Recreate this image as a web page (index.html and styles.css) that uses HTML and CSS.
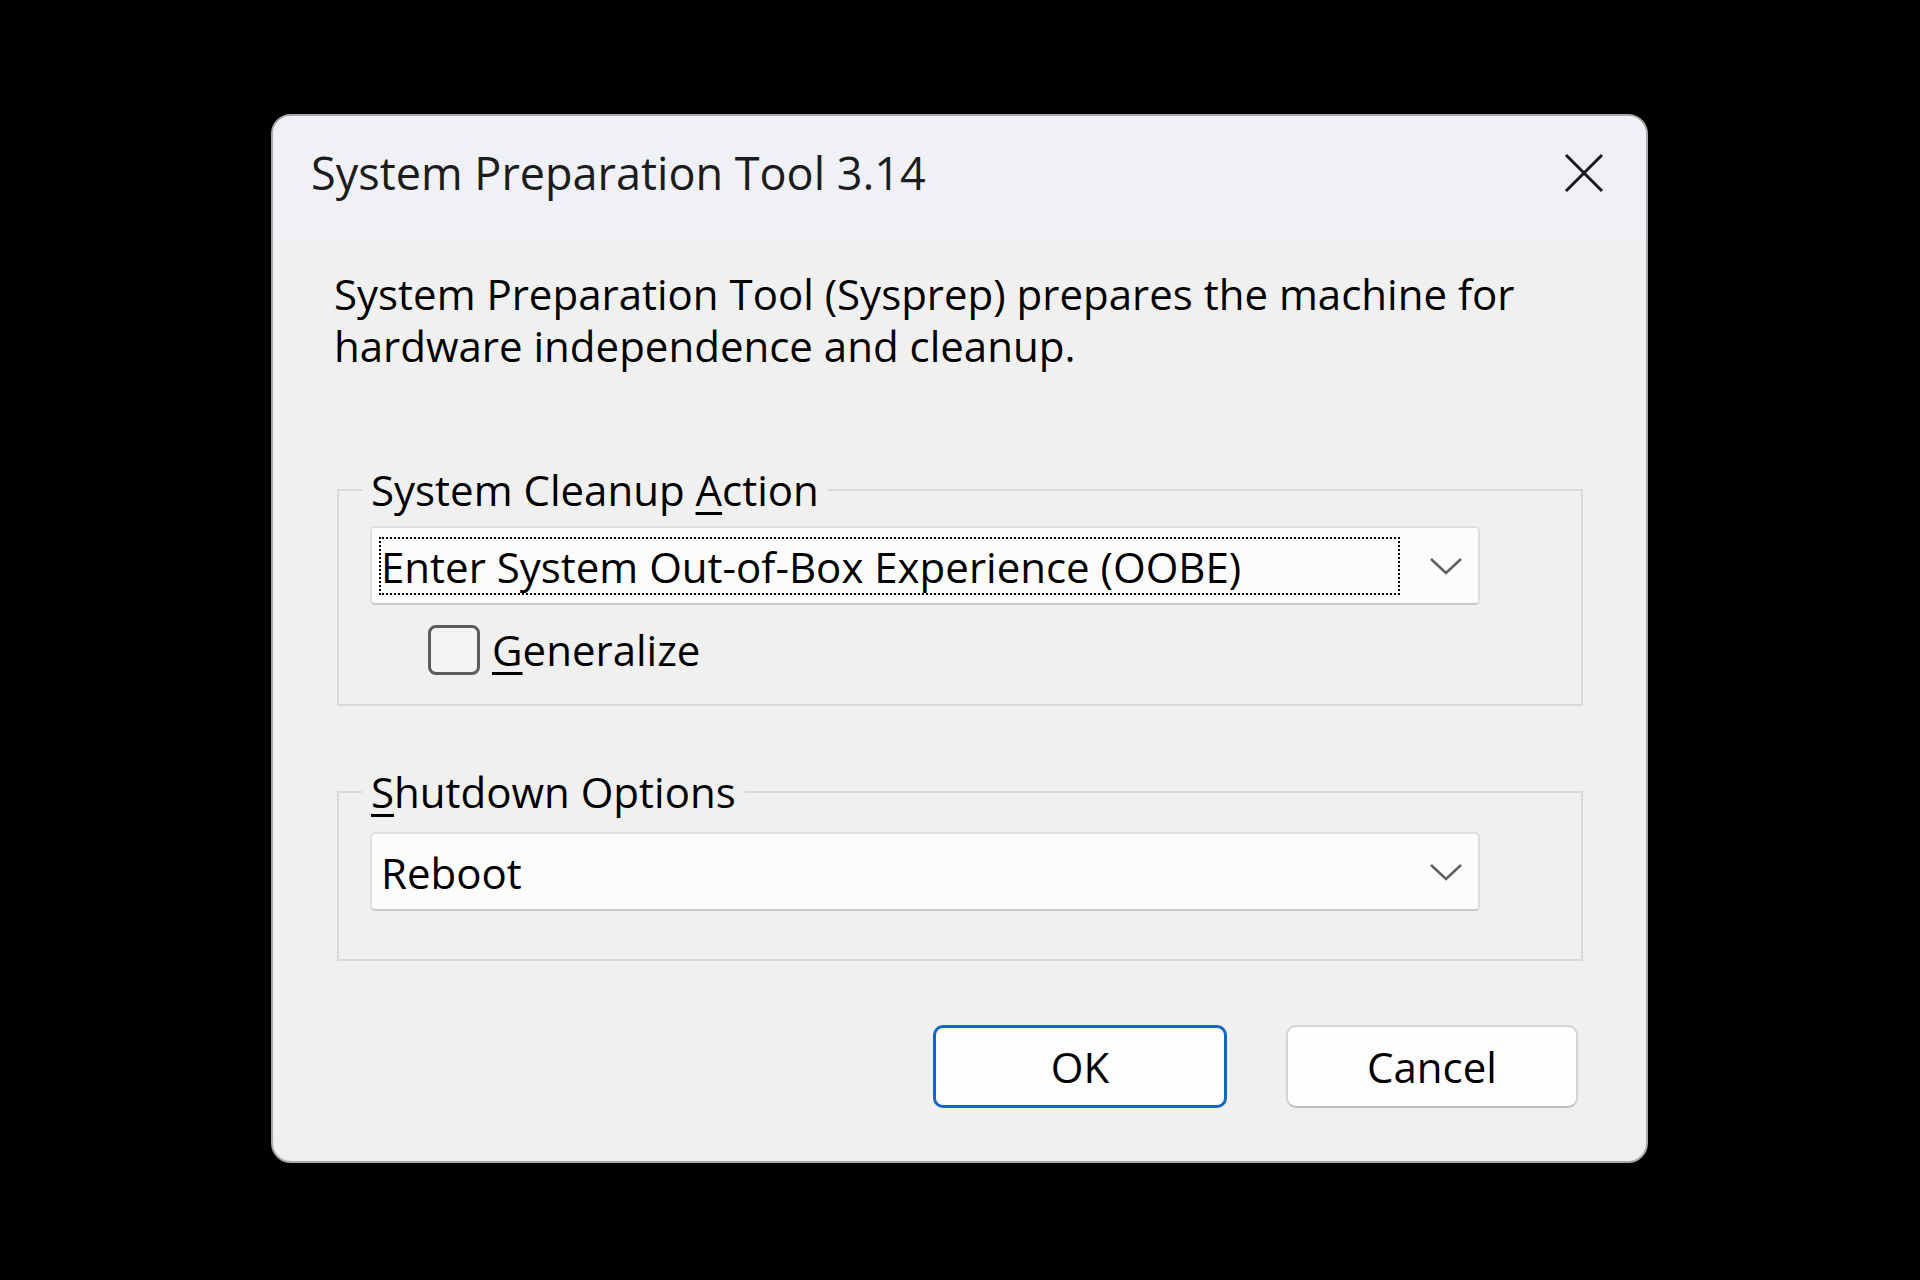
FILE: index.html
```html
<!DOCTYPE html>
<html lang="en">
<head>
    <meta charset="UTF-8">
    <title>System Preparation Tool 3.14</title>
    <link rel="stylesheet" href="styles.css">
</head>
<body>

    <div class="window">
        <div class="titlebar">
            <span class="title">System Preparation Tool 3.14</span>
            <svg class="close" width="40" height="40" viewBox="0 0 40 40">
                <path d="M2 2 L38 38 M38 2 L2 38" stroke="#1a1a1a" stroke-width="3" fill="none"/>
            </svg>
        </div>

        <div class="content">
            <p class="intro">System Preparation Tool (Sysprep) prepares the machine for hardware independence and cleanup.</p>

            <fieldset class="group group-cleanup">
                <legend>System Cleanup <u>A</u>ction</legend>
                <div class="combo">
                    <span class="combo-value focused">Enter System Out-of-Box Experience (OOBE)</span>
                    <svg class="chevron" width="34" height="18" viewBox="0 0 34 18">
                        <path d="M2 2 L17 16 L32 2" stroke="#606060" stroke-width="2.5" fill="none"/>
                    </svg>
                </div>
                <label class="check-row">
                    <span class="checkbox"></span>
                    <span class="check-label"><u>G</u>eneralize</span>
                </label>
            </fieldset>

            <fieldset class="group group-shutdown">
                <legend><u>S</u>hutdown Options</legend>
                <div class="combo">
                    <span class="combo-value">Reboot</span>
                    <svg class="chevron" width="34" height="18" viewBox="0 0 34 18">
                        <path d="M2 2 L17 16 L32 2" stroke="#606060" stroke-width="2.5" fill="none"/>
                    </svg>
                </div>
            </fieldset>

            <div class="actions">
                <button class="button primary">OK</button>
                <button class="button">Cancel</button>
            </div>
        </div>
    </div>

</body>
</html>
```

FILE: styles.css
```css
body {
    background-color: #000;
    font-family: "Open Sans", "Noto Sans", sans-serif;
    margin: 0;
    padding: 114px 0 0 271px;
    height: 1166px;
    color: #000;
}

/* Dialog window */
.window {
    width: 1373px;
    border: 2px solid #a9a9a9;
    border-radius: 20px;
    overflow: hidden;
    background-color: #f0f0f0;
}

.titlebar {
    height: 122px;
    box-sizing: border-box;
    padding: 0 42px 9px 38px;
    display: flex;
    align-items: center;
    justify-content: space-between;
    background-color: #eff1f7;
}

.title {
    font-size: 45px;
    color: #1c1c1c;
}

.content {
    padding: 0 63px 53px 64px;
    font-size: 42px;
}

.intro {
    margin: 30px 0 0 -3px;
    line-height: 52px;
    width: 1200px;
}

u {
    text-decoration-thickness: 3px;
    text-underline-offset: 6px;
}

/* Group boxes */
.group {
    margin: 0;
    border: 2px solid #d9d9d9;
    padding: 10px 0 29px 31px;
    min-inline-size: 0;
}

.group legend {
    padding: 0 9px;
    margin-left: -8px;
    line-height: 52px;
}

.group-cleanup {
    margin-top: 92px;
}

.group-shutdown {
    margin-top: 60px;
    padding-top: 14px;
    padding-bottom: 48px;
}

/* Combo box */
.combo {
    width: 1110px;
    height: 79px;
    box-sizing: border-box;
    border: 2px solid #dedede;
    border-bottom-color: #c9c9c9;
    border-radius: 5px;
    background-color: #fcfcfc;
    padding: 7px;
    display: flex;
    align-items: center;
}

.combo-value {
    width: 1021px;
    height: 58px;
    box-sizing: border-box;
    border: 2px solid transparent;
    padding: 3px 0 0 0;
    line-height: 50px;
    white-space: nowrap;
}

.combo-value.focused {
    border: 2px dotted #000;
}

.chevron {
    margin-left: 29px;
}

/* Checkbox */
.check-row {
    display: flex;
    align-items: center;
    height: 50px;
    margin: 20px 0 0 58px;
}

.checkbox {
    width: 52px;
    height: 50px;
    box-sizing: border-box;
    border: 3px solid #5c5c5c;
    border-radius: 8px;
    background-color: #f3f3f3;
}

.check-label {
    margin-left: 12px;
    line-height: 50px;
}

/* Buttons */
.actions {
    display: flex;
    justify-content: flex-end;
    gap: 59px;
    margin-top: 64px;
    padding-right: 5px;
}

.button {
    width: 292px;
    height: 83px;
    box-sizing: border-box;
    font-family: inherit;
    font-size: 42px;
    color: #000;
    background-color: #fdfdfd;
    border: 2px solid #d3d3d3;
    border-bottom-color: #bdbdbd;
    border-radius: 10px;
    padding: 0;
}

.button.primary {
    width: 294px;
    border: 3px solid #1068c4;
}
```
